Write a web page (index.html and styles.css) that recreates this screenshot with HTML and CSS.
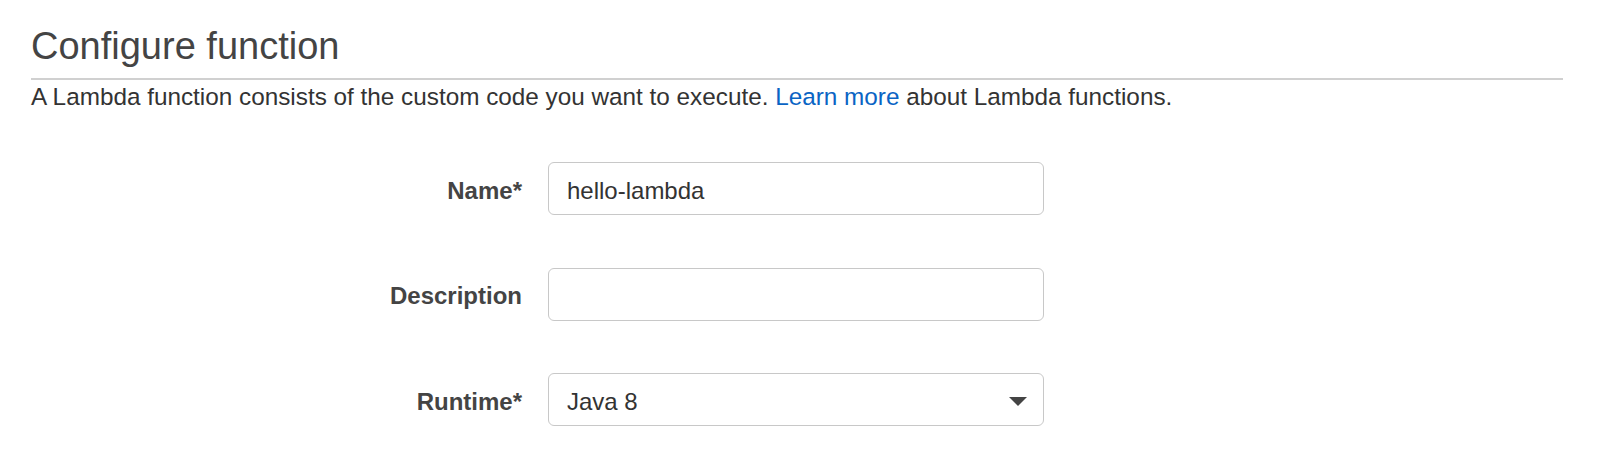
FILE: index.html
```html
<!DOCTYPE html>
<html lang="en">
<head>
<meta charset="utf-8">
<title>Configure function</title>
<link rel="stylesheet" href="styles.css">
</head>
<body>
<div class="page">
  <h1 class="title">Configure function</h1>
  <p class="intro">A Lambda function consists of the custom code you want to execute. <a href="#" class="link">Learn more</a> about Lambda functions.</p>
  <form class="form">
    <label class="label" for="fn-name">Name*</label>
    <input class="field" id="fn-name" type="text" value="hello-lambda">
    <label class="label" for="fn-desc">Description</label>
    <input class="field" id="fn-desc" type="text" value="">
    <label class="label">Runtime*</label>
    <div class="field select">
      <span class="select-value">Java 8</span>
      <svg class="caret" width="18" height="9" viewBox="0 0 18 9" aria-hidden="true"><path d="M0 0 H18 L9 9 Z" fill="#444"/></svg>
    </div>
  </form>
</div>
</body>
</html>
```
FILE: styles.css
```css
html, body {
  margin: 0;
  padding: 0;
  background: #ffffff;
}
body {
  font-family: "Liberation Sans", Arial, Helvetica, sans-serif;
  color: #333333;
}
.page {
  padding: 24px 37px 0 31px;
}
.title {
  margin: 0;
  font-size: 38px;
  line-height: 44px;
  font-weight: normal;
  color: #444444;
  padding-bottom: 10px;
  border-bottom: 2px solid #d0d0d0;
}
.intro {
  margin: 3px 0 0 0;
  font-size: 24.3px;
  line-height: 28px;
  color: #333333;
}
.link {
  color: #0a64c4;
  text-decoration: none;
}
.form {
  display: grid;
  grid-template-columns: 491px 496px;
  column-gap: 26px;
  row-gap: 52.5px;
  margin-top: 51px;
}
.label {
  align-self: center;
  text-align: right;
  padding-top: 4px;
  font-size: 24px;
  font-weight: bold;
  color: #444444;
}
.field {
  box-sizing: border-box;
  height: 53px;
  margin: 0;
  border: 1px solid #c8c8c8;
  border-radius: 6px;
  padding: 4px 16px 0 18px;
  font-family: "Liberation Sans", Arial, Helvetica, sans-serif;
  font-size: 24px;
  color: #333333;
  background: #ffffff;
  outline: none;
}
.select {
  display: flex;
  align-items: center;
  justify-content: space-between;
}
.caret {
  display: block;
}
```
